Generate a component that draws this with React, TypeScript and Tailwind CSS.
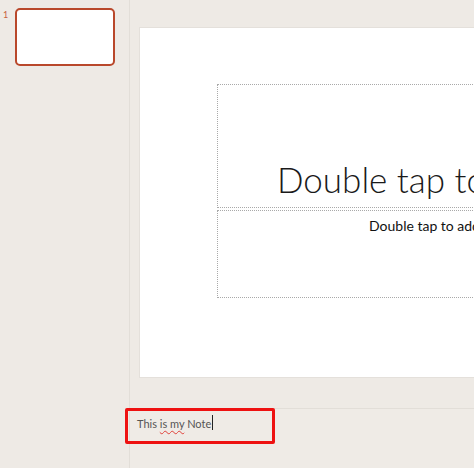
export default function App() {
  return (
    <div
      className="relative flex w-[474px] h-[468px] overflow-hidden bg-[#eeeae5]"
      style={{ fontFamily: "Lato, 'Open Sans', sans-serif" }}
    >
      {/* THUMBNAIL RAIL */}
      <div className="w-[130px] shrink-0 border-r border-[#e2ded8] bg-[#eeeae5] flex pt-[8px]">
        <span className="w-[15px] pl-[3px] pt-[1px] text-[9px] leading-[12px] text-[#c8623f]">
          1
        </span>
        <div className="w-[100px] h-[58px] rounded-[5px] border-2 border-[#b9482b] bg-white" />
      </div>

      {/* EDITOR */}
      <div className="flex-1 flex flex-col min-w-0">
        <div className="h-[409px] pl-[9px] pt-[27px] border-b border-[#e2ded8] overflow-hidden">
          <div className="w-[520px] h-[351px] bg-white border border-[#e4e0db] pl-[77px] pt-[56px]">
            <div className="w-[420px] h-[124px] border border-dotted border-[#a9a9a9] flex items-end pl-[59px] pb-[4px]">
              <span className="whitespace-nowrap text-[35px] leading-[48px] font-light text-[#1a1a1a]">
                Double tap to add title
              </span>
            </div>
            <div className="mt-[2px] w-[420px] h-[88px] border border-dotted border-[#a9a9a9] pl-[151px] pt-[2px]">
              <span className="whitespace-nowrap text-[14px] leading-[18px] text-[#111]">
                Double tap to add subtitle
              </span>
            </div>
          </div>
        </div>

        {/* NOTES */}
        <div className="flex-1 bg-[#efebe6] pl-[7px] pt-[1px]">
          <span className="text-[11px] leading-[15px] text-[#555]">
            This{" "}
            <span className="underline decoration-wavy decoration-[#e0413a] decoration-1 underline-offset-2">
              is my
            </span>{" "}
            Note
          </span>
          <span className="inline-block align-middle w-[1px] h-[15px] bg-[#222] ml-[1px] -mt-[2px]" />
        </div>
      </div>

      {/* annotation */}
      <div className="absolute left-[125px] top-[408px] w-[150px] h-[36px] border-[3px] border-[#ee1111] rounded-[2px]" />
    </div>
  );
}
